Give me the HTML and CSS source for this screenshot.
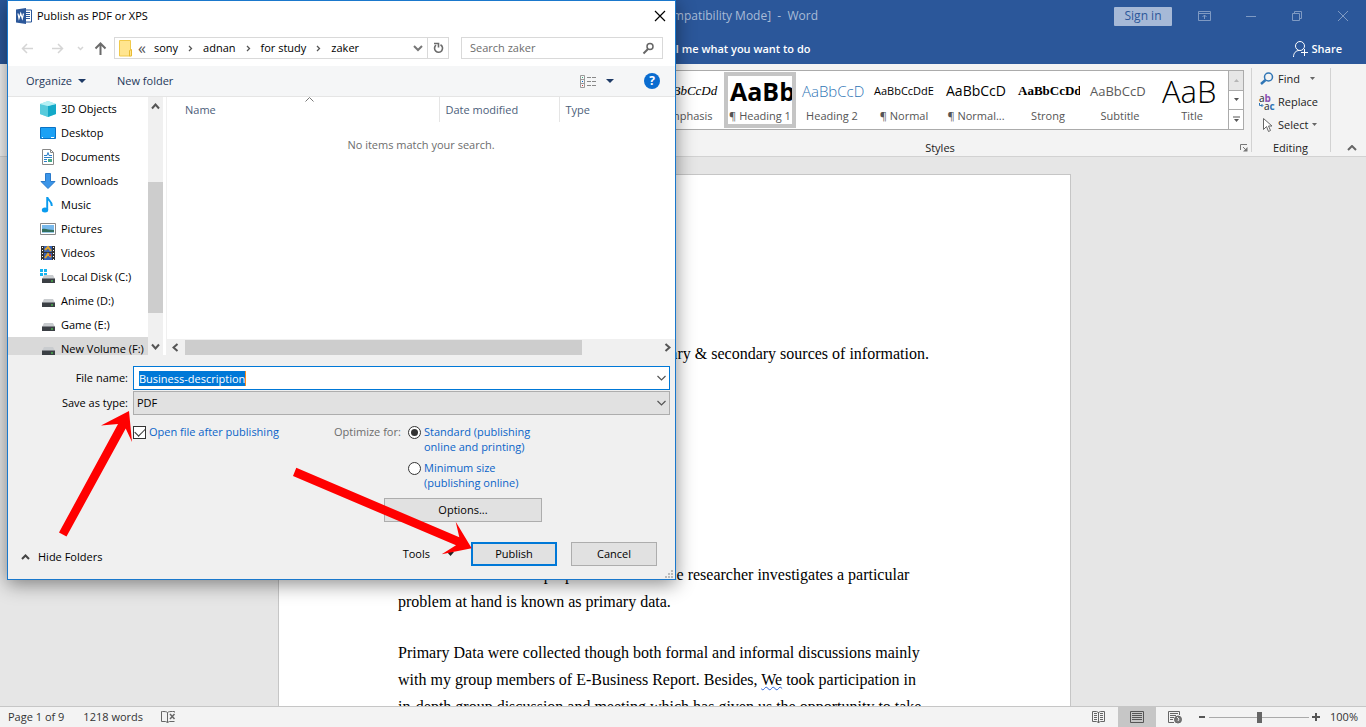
FILE: index.html
```html
<!DOCTYPE html>
<html lang="en">
<head>
<meta charset="utf-8">
<title>Word</title>
<link rel="stylesheet" href="styles.css">
</head>
<body>
<div class="app">
  <header class="app-header">
    <div class="title-row">
      <span class="doc-title">Business-description [Compatibility Mode]&nbsp; -&nbsp; Word</span>
      <button class="sign-in">Sign in</button>
      <button class="win-btn" aria-label="Ribbon display options"><svg width="14" height="12" viewBox="0 0 14 12"><path d="M.5 1.500h12v9H.5zM.5 3.500h12M6.500 9V5M4.500 7l2-2 2 2"/></svg></button>
      <button class="win-btn" aria-label="Minimize"><svg width="12" height="12" viewBox="0 0 12 12"><path d="M1 6.500h10"/></svg></button>
      <button class="win-btn" aria-label="Restore"><svg width="12" height="12" viewBox="0 0 12 12"><path d="M1.500 3.500h7v7h-7zM3.500 3.500v-2h7v7h-2"/></svg></button>
      <button class="win-btn" aria-label="Close"><svg width="12" height="12" viewBox="0 0 12 12"><path d="M1 1l10 10M11 1L1 11"/></svg></button>
    </div>
    <div class="tab-row">
      <span class="tell-me">Tell me what you want to do</span>
      <button class="share"><svg width="17" height="18" viewBox="0 0 17 18"><circle cx="8" cy="6" r="4.500"/><path d="M1.500 17c0-4 2.500-6.500 5.500-6.500M12.500 9v7M9 12.500h7"/></svg>Share</button>
    </div>
  </header>

  <section class="ribbon">
    <div class="group styles-group">
      <div class="gallery">
        <div class="gallery-items">
          <button class="style-item"><span class="sample emphasis">AaBbCcDd</span><span class="style-name">Emphasis</span></button>
          <button class="style-item selected"><span class="sample heading1">AaBb</span><span class="style-name">¶ Heading 1</span></button>
          <button class="style-item"><span class="sample heading2">AaBbCcD</span><span class="style-name">Heading 2</span></button>
          <button class="style-item"><span class="sample normal">AaBbCcDdE</span><span class="style-name">¶ Normal</span></button>
          <button class="style-item"><span class="sample normal-web">AaBbCcD</span><span class="style-name">¶ Normal...</span></button>
          <button class="style-item"><span class="sample strong">AaBbCcDd</span><span class="style-name">Strong</span></button>
          <button class="style-item"><span class="sample subtitle">AaBbCcD</span><span class="style-name">Subtitle</span></button>
          <button class="style-item"><span class="sample title">AaB</span><span class="style-name">Title</span></button>
        </div>
        <div class="gallery-scroll">
          <button class="off" aria-label="Up"><svg width="7" height="4"><path d="M1 4l2.500-3L6 4z" fill="#b5b5b5"/></svg></button>
          <button aria-label="Down"><svg width="7" height="4"><path d="M1 0h5L3.500 3z" fill="#555"/></svg></button>
          <button aria-label="More"><svg width="7" height="7"><path d="M0 1h7" stroke="#555"/><path d="M1 3h5L3.500 6z" fill="#555"/></svg></button>
        </div>
      </div>
      <div class="group-label">Styles<svg class="launcher" width="8" height="8"><path d="M.5 6V.5H7M3 3l3 3" fill="none" stroke="#777"/><path d="M7.500 3v4.500H3z" fill="#777"/></svg></div>
    </div>
    <div class="group editing-group">
      <div class="commands">
        <button class="command"><svg width="16" height="16" viewBox="0 0 16 16" fill="none" stroke="#2f75b5"><circle cx="9.500" cy="6" r="4" stroke-width="1.500"/><path d="M6.500 9L2 13" stroke-width="2.500"/></svg>Find<svg class="caret gap" width="7" height="4"><path d="M1 0h5L3.500 3z" fill="#666"/></svg></button>
        <button class="command"><span class="replace-icon"><span class="rep-top">a<b>b</b></span><span class="rep-bottom"><svg width="5" height="5" viewBox="0 0 5 5"><path d="M.5 0v2.500h3M2.500 1L4 2.500 2.500 4" fill="none" stroke="#2f75b5"/></svg>a<em>c</em></span></span>Replace</button>
        <button class="command"><svg width="16" height="16" viewBox="0 0 16 16"><path d="M4.500 1.500v11l3-3 2 5 2-1-2-4.500h3.500z" fill="#fff" stroke="#666"/></svg>Select<svg class="caret" width="7" height="4"><path d="M1 0h5L3.500 3z" fill="#666"/></svg></button>
      </div>
      <div class="group-label">Editing</div>
    </div>
    <button class="collapse" aria-label="Collapse the ribbon"><svg width="10" height="6" viewBox="0 0 10 6"><path d="M1 5l4-4 4 4" fill="none" stroke="#666" stroke-width="2"/></svg></button>
  </section>

  <main class="workspace">
    <article class="page">
      <p class="intro">Data has been collected from both its primary &amp; secondary sources of information.</p>
      <p>Data collected for this purpose for which the researcher investigates a particular<br>problem at hand is known as primary data.</p>
      <p>Primary Data were collected though both formal and informal discussions mainly<br>with my group members of E-Business Report. Besides, <span class="grammar">We</span> took participation in<br>in-depth group discussion and meeting which has given us the opportunity to take</p>
    </article>
  </main>

  <footer class="status">
    <span class="page-count">Page 1 of 9</span>
    <span class="word-count">1218 words</span>
    <svg width="15" height="14" viewBox="0 0 15 14" fill="none" stroke="#666"><path d="M6.500 12.500V2.500c-1-1-3-1-5-1H.5v10h4l2 1 2-1h5M6.500 2.500c1-1 3-1 5-1h2v1"/><path d="M9 4l4.500 5M13.500 4L9 9" stroke-width="1.500"/></svg>
    <span class="spacer"></span>
    <button class="view" aria-label="Read mode"><svg width="14" height="14" viewBox="0 0 14 14" fill="none" stroke="#666"><path d="M.5 1.500h4l2 1 2-1h4v10h-4l-2 1-2-1h-4zM6.500 2v11M2 3.500h3M2 5.500h3M2 7.500h3M2 9.500h3M8 3.500h3M8 5.500h3M8 7.500h3M8 9.500h3"/></svg></button>
    <button class="view active" aria-label="Print layout"><svg width="14" height="14" viewBox="0 0 14 14" fill="none" stroke="#555"><path d="M.5 1.500h13v11H.5zM2 3.500h10M2 5.500h10M2 7.500h10M2 9.500h10"/></svg></button>
    <button class="view" aria-label="Web layout"><svg width="14" height="14" viewBox="0 0 14 14" fill="none" stroke="#666"><path d="M6 12.500H.5v-11h11V5M2 3.500h8M2 5.500h6M2 7.500h4M2 9.500h3"/><circle cx="10" cy="9.500" r="3.500" fill="#777"/><path d="M9 7l2 2-1 2" stroke="#eee"/></svg></button>
    <button class="zoom-btn" aria-label="Zoom out"><svg width="8" height="8"><path d="M1 4h6" stroke="#555" stroke-width="2"/></svg></button>
    <input class="zoom" type="range" min="0" max="200" value="101" aria-label="Zoom">
    <button class="zoom-btn" aria-label="Zoom in"><svg width="8" height="8"><path d="M0 4h8M4 0v8" stroke="#555" stroke-width="2"/></svg></button>
    <span class="zoom-value">100%</span>
  </footer>
</div>

<div class="dialog" role="dialog" aria-label="Publish as PDF or XPS">
  <div class="dialog-title">
    <svg width="16" height="16" viewBox="0 0 16 16"><path d="M8 2h7.500v12H8z" fill="#fff" stroke="#2b579a"/><path d="M10 4.500h4M10 6.500h4M10 8.500h4M10 10.500h4" stroke="#2b579a"/><path d="M0 1.500L10 0v16L0 14.500z" fill="#2b579a"/><path d="M2 5.500l1 5 1.700-5 1.600 5 1.200-5" fill="none" stroke="#fff" stroke-width="1.200"/></svg>
    <span>Publish as PDF or XPS</span>
    <button class="close" aria-label="Close"><svg width="12" height="12" viewBox="0 0 12 12"><path d="M1 1l10 10M11 1L1 11" stroke="#000" stroke-width="1.200"/></svg></button>
  </div>

  <div class="nav-row">
    <button class="nav-btn" aria-label="Back"><svg width="13" height="11" viewBox="0 0 13 11"><path d="M12 5.500H2M6 1L1.500 5.500 6 10" fill="none" stroke="#d5d5d5" stroke-width="1.500"/></svg></button>
    <button class="nav-btn" aria-label="Forward"><svg width="13" height="11" viewBox="0 0 13 11"><path d="M1 5.500h10M7 1l4.500 4.500L7 10" fill="none" stroke="#d5d5d5" stroke-width="1.500"/></svg></button>
    <button class="nav-btn recent" aria-label="Recent locations"><svg width="7" height="5"><path d="M1 1l2.500 2.500L6 1" fill="none" stroke="#d5d5d5" stroke-width="1.500"/></svg></button>
    <button class="nav-btn" aria-label="Up"><svg width="13" height="13" viewBox="0 0 13 13"><path d="M6.500 13V2M1.500 6.500l5-5 5 5" fill="none" stroke="#6b6b6b" stroke-width="2"/></svg></button>
    <div class="address">
      <svg width="14" height="17" viewBox="0 0 14 17"><path d="M.5.500h11v15.500H.5z" fill="#ffe58f" stroke="#f0c94a"/><path d="M10.500 10.500l2-1v6.500h-2z" fill="#ffe58f" stroke="#e8bb33"/></svg>
      <span class="crumb-mark">«</span>
      <a href="#">sony</a><svg class="sep" width="5" height="7"><path d="M1 1l2.500 2.500L1 6"/></svg>
      <a href="#">adnan</a><svg class="sep" width="5" height="7"><path d="M1 1l2.500 2.500L1 6"/></svg>
      <a href="#">for study</a><svg class="sep" width="5" height="7"><path d="M1 1l2.500 2.500L1 6"/></svg>
      <a href="#">zaker</a>
      <span class="spacer"></span>
      <button class="address-drop" aria-label="Previous locations"><svg width="10" height="7"><path d="M1 1l4 4 4-4" fill="none" stroke="#777" stroke-width="2"/></svg></button>
      <button class="refresh" aria-label="Refresh"><svg width="11" height="12" viewBox="0 0 11 12"><path d="M7.500 2.800a4 4 0 1 1-4.500.4" fill="none" stroke="#6b6b6b" stroke-width="1.600"/><path d="M1 1.500h4.500v4" fill="none" stroke="#6b6b6b" stroke-width="1.600"/></svg></button>
    </div>
    <div class="search"><input type="text" placeholder="Search zaker" aria-label="Search zaker"><svg width="13" height="13" viewBox="0 0 13 13" fill="none" stroke="#666"><circle cx="8" cy="4.500" r="3" stroke-width="1.500"/><path d="M6 7l-4.500 4.500" stroke-width="2"/></svg></div>
  </div>

  <div class="toolbar">
    <button>Organize<svg width="8" height="4"><path d="M0 0h8L4 4z" fill="#1e3a66"/></svg></button>
    <button>New folder</button>
    <span class="spacer"></span>
    <button class="view-mode" aria-label="Change your view"><svg width="17" height="13" viewBox="0 0 17 13" fill="none"><path d="M.5.500h4v12h-4zM.5 4.500h4M.5 8.500h4" stroke="#999"/><path d="M7 2.500h10M7 6.500h10M7 10.500h10" stroke="#888" stroke-dasharray="4 1"/><path d="M2 2.500h1" stroke="#3a7"/><path d="M2 6.500h1" stroke="#06c"/><path d="M2 10.500h1" stroke="#c33"/></svg><svg width="8" height="4"><path d="M0 0h8L4 4z" fill="#1e3a66"/></svg></button>
    <button class="help" aria-label="Help">?</button>
  </div>

  <div class="browser">
    <ul class="tree">
      <li><svg viewBox="0 0 16 16"><path d="M0 3l8-3 8 3v10l-8 3-8-3z" fill="#7fe0ea"/><path d="M8 5l8-2v10l-8 3z" fill="#13a9c8"/><path d="M0 3l8 2v11l-8-3z" fill="#57cbdc"/><path d="M0 3l8-3 8 3-8 2z" fill="#b5f0f4"/></svg>3D Objects</li>
      <li><svg viewBox="0 0 16 16"><path d="M.5 2.500h15v11H.5z" fill="#1ba1f5" stroke="#0b72c4"/><path d="M2 12.500h1M11 12.500h3" stroke="#fff"/></svg>Desktop</li>
      <li><svg viewBox="0 0 16 16"><path d="M2.500.5h8l3 3v12h-11z" fill="#fff" stroke="#888"/><path d="M10.500.5v3h3" fill="none" stroke="#888"/><path d="M4 6.500h3l1-3 1 3h3M4 8.500h8M4 10.500h3" fill="none" stroke="#2d7fc8"/><path d="M8 10h4v3H8z" fill="#4a8"/><path d="M4 12.500h3" stroke="#2d7fc8"/></svg>Documents</li>
      <li><svg viewBox="0 0 16 16"><path d="M5.500.5h5v8h4.500L8 15.500 1 8.500h4.500z" fill="#3b95e8" stroke="#2a7acb"/></svg>Downloads</li>
      <li><svg viewBox="0 0 16 16"><ellipse cx="5" cy="13" rx="3.200" ry="2.500" fill="#0a9bee"/><path d="M7.200 13V0c.8 3.500 5 4 4.500 9" fill="none" stroke="#0a9bee" stroke-width="1.900"/></svg>Music</li>
      <li><svg viewBox="0 0 16 16"><path d="M.5 2.500h15v11H.5z" fill="#fff" stroke="#888"/><path d="M2 4h12v8H2z" fill="#78b9ec"/><path d="M2 8c4-1 6 1 12 1v3H2z" fill="#34705f"/><path d="M2 11h12v1H2z" fill="#9ccbe8"/></svg>Pictures</li>
      <li><svg viewBox="0 0 16 16"><path d="M1 1h14v14H1z" fill="#333"/><path d="M4 1h8v6H4zM4 8h8v7H4z" fill="#3661b5"/><path d="M5 5l3-3 3 4M5 13l3-4 3 3" fill="none" stroke="#e0a52c" stroke-width="2"/><path d="M2.500 2v13M13.500 2v13" stroke="#fff" stroke-dasharray="1 2"/><path d="M9 9h2v2H9z" fill="#c33"/></svg>Videos</li>
      <li><svg viewBox="0 0 16 16"><path d="M0 0h3v3H0zM4 0h3v3H4zM0 4h3v3H0zM4 4h3v3H4z" fill="#18b4f0"/><path d="M4 6h9l2 4H2z" fill="#c9cccf"/><path d="M2 9.500h13V14H2z" fill="#3b3f44"/><path d="M11 12h2" stroke="#4ee34e"/></svg>Local Disk (C:)</li>
      <li><svg viewBox="0 0 16 16"><path d="M4 6h9l2 4H2z" fill="#c9cccf"/><path d="M2 9.500h13V14H2z" fill="#3b3f44"/><path d="M11 12h2" stroke="#4ee34e"/></svg>Anime (D:)</li>
      <li><svg viewBox="0 0 16 16"><path d="M4 6h9l2 4H2z" fill="#c9cccf"/><path d="M2 9.500h13V14H2z" fill="#3b3f44"/><path d="M11 12h2" stroke="#4ee34e"/></svg>Game (E:)</li>
      <li class="current"><svg viewBox="0 0 16 16"><path d="M4 6h9l2 4H2z" fill="#c9cccf"/><path d="M2 9.500h13V14H2z" fill="#3b3f44"/><path d="M11 12h2" stroke="#4ee34e"/></svg>New Volume (F:)</li>
    </ul>
    <div class="vscroll">
      <svg width="9" height="7"><path d="M1 5.500l3.500-4 3.500 4" /></svg>
      <div class="vtrack"><div class="vthumb"></div></div>
      <svg width="9" height="7"><path d="M1 1.500l3.500 4 3.500-4"/></svg>
    </div>
    <div class="files">
      <table>
        <thead><tr><th class="col-name">Name<svg class="sort" width="9" height="5"><path d="M.5 4.500l4-4 4 4" fill="none" stroke="#777"/></svg></th><th class="col-date">Date modified</th><th>Type</th></tr></thead>
        <tbody><tr><td colspan="3">No items match your search.</td></tr></tbody>
      </table>
      <div class="hscroll">
        <svg width="7" height="9"><path d="M5.500 1l-4 3.500 4 3.500"/></svg>
        <div class="htrack"><div class="hthumb"></div></div>
        <svg width="7" height="9"><path d="M1.500 1l4 3.500-4 3.500"/></svg>
      </div>
    </div>
  </div>

  <form class="save-form">
    <div class="field">
      <label for="filename">File name:</label>
      <div class="combo"><input id="filename" type="text" value="Business-description"><button type="button" aria-label="File names"><svg width="9" height="6"><path d="M.5 1l4 4 4-4"/></svg></button></div>
    </div>
    <div class="field">
      <label for="filetype">Save as type:</label>
      <div class="select-box"><select id="filetype"><option>PDF</option><option>XPS Document</option></select><svg width="9" height="6"><path d="M.5 1l4 4 4-4"/></svg></div>
    </div>
    <div class="options">
      <label class="open-after"><input type="checkbox" checked><span>Open file after publishing</span></label>
      <div class="optimize">
        <span class="optimize-label">Optimize for:</span>
        <div class="radios">
          <label><input type="radio" name="opt" checked><span>Standard (publishing<br>online and printing)</span></label>
          <label><input type="radio" name="opt"><span>Minimum size<br>(publishing online)</span></label>
        </div>
      </div>
    </div>
    <button type="button" class="btn options-btn">Options...</button>
    <div class="actions">
      <button type="button" class="plain hide-folders"><svg width="9" height="6"><path d="M1 5l3.500-3.500L8 5" fill="none" stroke="#444" stroke-width="2"/></svg>Hide Folders</button>
      <span class="spacer"></span>
      <button type="button" class="plain tools">Tools<svg width="7" height="4"><path d="M0 0h7L3.500 4z" fill="#222"/></svg></button>
      <button type="button" class="btn primary">Publish</button>
      <button type="button" class="btn">Cancel</button>
    </div>
    <svg class="grip" width="8" height="8" fill="#bbb"><path d="M6 0h2v2H6zM3 3h2v2H3zM6 3h2v2H6zM0 6h2v2H0zM3 6h2v2H3zM6 6h2v2H6z"/></svg>
  </form>
  <svg class="arrows" viewBox="0 0 667 578" fill="#f00"><path d="M121 410L124 441 117.700 427.500 58.500 535.500 51 531.500 110 423 93 424.500z"/><path d="M288.300 466.700L451.300 536.300 447.700 520.700 463.700 547.300 433.700 553.300 448 544.300 285 475z"/></svg>
</div>
</body>
</html>
```
FILE: styles.css
```css
* { box-sizing: border-box; }
body { margin: 0; font: 11px/16px "Open Sans", "Noto Sans", sans-serif; color: #000; overflow: hidden; }
button { font: inherit; color: inherit; background: none; border: 0; padding: 0; display: flex; align-items: center; justify-content: center; }
svg { flex: none; display: block; }
.spacer { flex: 1; }

.app { height: 100vh; display: flex; flex-direction: column; background: #e6e6e6; }
.app-header { background: #2b579a; flex: none; }
.title-row { height: 32px; display: flex; align-items: center; color: #a9bbd7; font-size: 12px; }
.doc-title { flex: 1; text-align: right; padding-right: 296px; }
.sign-in { width: 58px; height: 19px; background: #a6b9d7; color: #2b579a; border-radius: 1px; margin-right: 10px; }
.win-btn { width: 46px; height: 30px; }
.win-btn svg { fill: none; stroke: #7f9ac3; }
.tab-row { height: 32px; display: flex; align-items: center; justify-content: flex-end; color: #fff; padding: 1px 24px 0 0; }
.tell-me { font-weight: 600; margin-right: 482px; }
.share { gap: 2px; font-weight: 600; }
.share svg { fill: none; stroke: #fff; }

.ribbon { flex: none; height: 93px; background: #f3f3f3; border-bottom: 1px solid #d2d2d2; display: flex; justify-content: flex-end; padding-top: 4px; }
.group { border-right: 1px solid #d2d2d2; display: flex; flex-direction: column; margin-bottom: 4px; }
.styles-group { width: 623px; padding: 2px 7px 0 7px; }
.gallery { height: 60px; border: 1px solid #ababab; background: #fff; display: flex; }
.gallery-items { flex: 1; display: flex; justify-content: flex-end; overflow: hidden; }
.style-item { flex: none; width: 72px; height: 56px; margin-top: 1px; padding: 4px; flex-direction: column; justify-content: space-between; align-items: stretch; text-align: center; color: #555; }
.style-item.selected { border: 4px solid #c5c5c5; padding: 0; }
.sample { height: 30px; display: flex; align-items: center; overflow: hidden; white-space: nowrap; color: #000; padding-left: 2px; }
.style-name { white-space: nowrap; height: 16px; line-height: 16px; display: block; }
.emphasis { font: italic 13px "Liberation Serif", serif; }
.heading1 { font-size: 25px; font-weight: 700; }
.heading2 { font-size: 15px; color: #2e74b5; font-weight: 300; }
.normal { font-size: 11px; }
.normal-web { font-size: 14px; }
.strong { font: bold 13px "Liberation Serif", serif; }
.subtitle { font-size: 13px; color: #5a5a5a; }
.title { font-size: 31px; font-weight: 300; }
.gallery-scroll { width: 15px; flex: none; display: flex; flex-direction: column; border-left: 1px solid #ababab; }
.gallery-scroll button { flex: 1; }
.gallery-scroll button + button { border-top: 1px solid #ababab; }
.gallery-scroll .off { background: #e6e6e6; }
.group-label { margin: auto 0 -4px; height: 16px; text-align: center; color: #222; display: flex; justify-content: center; align-items: center; }
.launcher { position: absolute; margin-left: 607px; }
.editing-group { width: 79px; padding-left: 7px; }
.editing-group .group-label { padding-right: 8px; }
.commands { display: flex; flex-direction: column; margin-top: -1px; }
.command { height: 23px; justify-content: flex-start; gap: 3px; color: #222; }
.caret.gap { margin-left: 6px; }
.replace-icon { width: 16px; font-size: 10px; line-height: 8px; display: flex; flex-direction: column; }
.rep-top { padding-right: 4px; }
.rep-top, .rep-bottom { display: flex; align-items: center; height: 8px; }
.rep-top b { color: #8a4fb0; }
.rep-bottom em { color: #2f75b5; font-style: normal; font-weight: 700; }
.collapse { width: 35px; align-self: flex-end; height: 16px; padding-left: 6px; }

.workspace { flex: 1; min-height: 0; overflow: hidden; padding: 17px 17px 0 0; }
.page { width: 793px; min-height: 100%; margin: 0 auto; background: #fff; border: 1px solid #c6c6c6; border-bottom: 0; padding: 165px 100px 0 119px; font: 16px/27px "Liberation Serif", serif; white-space: nowrap; }
.page p { margin: 0 0 24px; }
.page .intro { margin-bottom: 194px; }
.grammar { text-decoration: underline wavy #2b62d9 1px; text-underline-offset: 1px; }

.status { flex: none; height: 21px; background: #f3f3f3; border-top: 1px solid #c6c6c6; display: flex; align-items: center; color: #333; padding: 0 8px; }
.word-count { margin: 0 18px 0 19px; }
.view { width: 38px; height: 20px; }
.view.active { background: #c6c6c6; }
.zoom-btn { width: 10px; height: 14px; margin: 0 2px; }
.zoom { appearance: none; width: 100px; height: 14px; margin: 0; background: linear-gradient(#aaa, #aaa) center / 100% 1px no-repeat; }
.zoom::-webkit-slider-thumb { appearance: none; width: 5px; height: 11px; background: #666; }
.view:nth-of-type(3) { margin-right: 1px; }
.zoom-value { margin-left: 7px; }

.dialog { position: absolute; left: 7px; top: 0; width: 669px; height: 580px; border: 1px solid #1a78cc; background: #fff; box-shadow: 0 4px 18px rgba(0,0,0,.45); display: flex; flex-direction: column; }
.dialog-title { height: 31px; display: flex; align-items: center; gap: 5px; padding: 0 9px 2px 8px; }
.close { margin-left: auto; }
.nav-row { height: 32px; display: flex; align-items: center; padding: 0 12px 0 13px; }
.nav-btn { width: 13px; height: 20px; margin-right: 17px; }
.nav-btn:nth-child(2) { margin-right: 10px; }
.nav-btn.recent { margin-right: 7px; }
.nav-btn:nth-child(4) { margin-right: 7px; }
.address { flex: 1; height: 22px; border: 1px solid #d9d9d9; display: flex; align-items: center; padding-left: 4px; }
.address a { color: #000; text-decoration: none; }
.crumb-mark { margin: 0 8px 0 5px; font-size: 16px; color: #555; }
.sep { margin: 0 10px; fill: none; stroke: #555; stroke-width: 1.3; }
.address-drop { width: 18px; }
.refresh { width: 21px; height: 20px; border-left: 1px solid #d9d9d9; }
.search { width: 202px; height: 22px; margin-left: 12px; border: 1px solid #d9d9d9; display: flex; align-items: center; padding: 0 7px 0 8px; }
.search input { flex: 1; min-width: 0; border: 0; padding: 0; font: inherit; outline: 0; }
.search input::placeholder { color: #6d6d6d; }
.toolbar { margin-top: 2px; height: 31px; background: #f5f6f7; border-bottom: 1px solid #e5e5e5; display: flex; align-items: center; gap: 31px; padding: 0 15px 0 18px; color: #1e395b; }
.toolbar button { gap: 6px; }
.toolbar .view-mode { gap: 9px; }
.toolbar .help { width: 16px; height: 16px; border-radius: 50%; background: #0a6cd0; color: #fff; font-size: 12px; font-weight: 700; margin-left: -1px; }

.browser { height: 258px; display: flex; }
.tree { width: 140px; list-style: none; margin: 0; padding: 0; overflow: hidden; flex: none; }
.tree li { height: 24px; display: flex; align-items: center; gap: 5px; padding-left: 32px; white-space: nowrap; }
.tree svg { width: 16px; height: 16px; }
.tree .current { background: #d9d9d9; }
.vscroll { width: 15px; background: #f0f0f0; display: flex; flex-direction: column; align-items: center; padding: 6px 0 5px; }
.vscroll svg, .hscroll svg { fill: none; stroke: #555; stroke-width: 2; }
.vtrack { flex: 1; width: 15px; }
.vthumb { height: 131px; margin-top: 72px; background: #cdcdcd; }
.files { flex: 1; min-width: 0; margin-left: 3px; border-left: 1px solid #f0f0f0; display: flex; flex-direction: column; }
.files table { width: 100%; border-collapse: collapse; table-layout: fixed; }
.files th { height: 25px; padding: 0 6px; font-weight: 400; text-align: left; color: #4c607a; border-right: 1px solid #e5e5e5; }
.files th:last-child { border: 0; }
.files .col-name { width: 272px; padding-left: 18px; position: relative; }
.files .col-date { width: 120px; }
.sort { position: absolute; left: 51%; top: 0; }
.files td { padding: 15px 0 0; text-align: center; color: #6d6d6d; }
.hscroll { margin-top: auto; height: 16px; background: #f0f0f0; display: flex; align-items: center; padding: 0 4px 0 5px; }
.htrack { flex: 1; padding: 0 6px; }
.hthumb { width: 84%; height: 15px; background: #cdcdcd; }

.save-form { flex: 1; background: #f0f0f0; padding: 11px 5px 13px; position: relative; display: flex; flex-direction: column; }
.field { display: flex; align-items: center; margin-bottom: 1px; }
.field > label { width: 115px; text-align: right; margin-right: 5px; }
.combo, .select-box { flex: 1; height: 24px; border: 1px solid #0078d7; background: #fff; display: flex; align-items: center; }
.combo { padding-left: 5px; }
.combo svg, .select-box svg { fill: none; stroke: #555; stroke-width: 1.2; }
.combo input { field-sizing: content; font: inherit; line-height: 15px; height: 15px; border: 0; border-right: 1px solid #ff8c1a; padding: 0; outline: 0; background: #0078d7; color: #fff; }
.combo button { margin-left: auto; width: 16px; height: 20px; }
.select-box { border-color: #adadad; background: #e1e1e1; }
.select-box select { flex: 1; appearance: none; border: 0; background: none; font: inherit; color: #000; height: 20px; padding: 0 3px; margin-right: -12px; }
.select-box svg { margin-right: 3px; }
.options { display: flex; align-items: flex-start; margin-top: 8px; padding-left: 120px; line-height: 15px; color: #0a64c8; }
.options label { display: flex; align-items: flex-start; gap: 3px; }
.open-after { width: 201px; }
.options input { appearance: none; flex: none; width: 13px; height: 13px; margin: 2px 0 0; border: 1px solid #333; background: #fff; display: flex; align-items: center; justify-content: center; }
.options input[type="radio"] { border-radius: 50%; }
.options input[type="radio"]:checked::after { content: ""; width: 7px; height: 7px; border-radius: 50%; background: #333; }
.options input[type="checkbox"]::after { content: ""; width: 9px; height: 5px; border: solid #333; border-width: 0 0 1px 1px; transform: rotate(-45deg); margin-bottom: 3px; }
.optimize { display: flex; gap: 5px; }
.optimize-label { width: 69px; color: #6d6d6d; }
.radios { display: flex; flex-direction: column; gap: 6px; }
.btn { height: 24px; width: 86px; background: #e1e1e1; border: 1px solid #adadad; }
.options-btn { width: 158px; margin: 8px 0 0 371px; }
.btn.primary { border: 2px solid #0078d7; margin-right: 14px; }
.actions { margin-top: auto; display: flex; align-items: center; padding: 0 13px 0 8px; }
.plain { gap: 8px; }
.hide-folders { padding-top: 5px; }
.tools { gap: 17px; margin-right: 17px; }
.grip { position: absolute; right: 2px; bottom: 1px; }
.arrows { position: absolute; left: 0; top: 0; width: 100%; height: 100%; pointer-events: none; }
```
